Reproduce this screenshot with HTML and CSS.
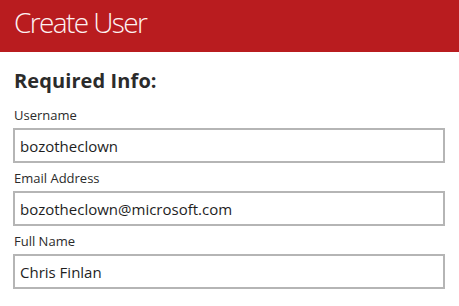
FILE: index.html
```html
<!DOCTYPE html>
<html lang="en">
<head>
<meta charset="utf-8">
<title>Create User</title>
<link rel="stylesheet" href="styles.css">
</head>
<body>
<header class="app-header">
  <h1 class="app-title">Create User</h1>
</header>
<main class="form">
  <h2 class="section-title">Required Info:</h2>
  <div class="fields">
    <div class="field">
      <label class="field-label" for="username">Username</label>
      <input class="field-input" id="username" type="text" value="bozotheclown">
    </div>
    <div class="field">
      <label class="field-label" for="email">Email Address</label>
      <input class="field-input" id="email" type="text" value="bozotheclown@microsoft.com">
    </div>
    <div class="field">
      <label class="field-label" for="fullname">Full Name</label>
      <input class="field-input" id="fullname" type="text" value="Chris Finlan">
    </div>
  </div>
</main>
</body>
</html>
```

FILE: styles.css
```css
html, body {
  margin: 0;
  padding: 0;
  background: #ffffff;
}

body {
  font-family: "Open Sans", "Noto Sans", "Liberation Sans", sans-serif;
  color: #2b2b2b;
  width: 459px;
  height: 306px;
  overflow: hidden;
}

.app-header {
  background: #b91c1f;
  height: 52px;
  box-sizing: border-box;
  padding: 3px 14px 0 14px;
}

.app-title {
  margin: 0;
  font-family: "Open Sans", "Noto Sans", sans-serif;
  font-size: 28px;
  line-height: 38px;
  font-weight: 300;
  color: #fdf2f2;
  letter-spacing: -1.6px;
}

.form {
  padding: 17px 14px 0 13px;
}

.section-title {
  margin: 0 0 0 1px;
  font-size: 20px;
  line-height: 24px;
  font-weight: 700;
  color: #2b2b2b;
  letter-spacing: 0.1px;
}

.fields {
  display: flex;
  flex-direction: column;
  gap: 7px;
  margin-top: 14px;
}

.field {
  display: flex;
  flex-direction: column;
}

.field-label {
  font-size: 13px;
  line-height: 17px;
  color: #2b2b2b;
  padding-left: 1px;
}

.field-input {
  margin-top: 4px;
  width: 432px;
  height: 35px;
  box-sizing: border-box;
  border: 2px solid #b5b5b5;
  border-radius: 0;
  padding: 0 5px;
  font-family: inherit;
  font-size: 15px;
  color: #1e1e1e;
  background: #ffffff;
  outline: none;
}
```
